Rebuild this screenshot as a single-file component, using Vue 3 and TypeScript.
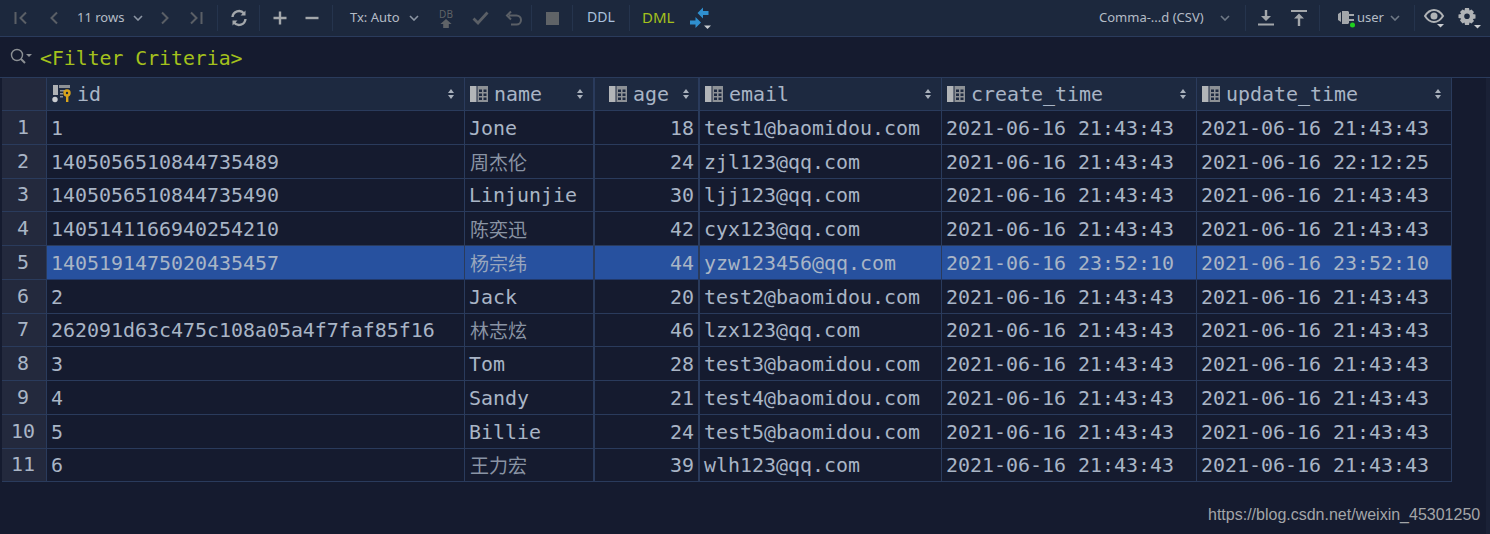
<script setup lang="ts">
interface Row {
  id: string
  name: string
  age: number
  email: string
  created: string
  updated: string
}
const stamp = '2021-06-16 21:43:43'
const rows: Row[] = [
  { id: '1', name: 'Jone', age: 18, email: 'test1@baomidou.com', created: stamp, updated: stamp },
  { id: '1405056510844735489', name: '周杰伦', age: 24, email: 'zjl123@qq.com', created: stamp, updated: '2021-06-16 22:12:25' },
  { id: '1405056510844735490', name: 'Linjunjie', age: 30, email: 'ljj123@qq.com', created: stamp, updated: stamp },
  { id: '1405141166940254210', name: '陈奕迅', age: 42, email: 'cyx123@qq.com', created: stamp, updated: stamp },
  { id: '1405191475020435457', name: '杨宗纬', age: 44, email: 'yzw123456@qq.com', created: '2021-06-16 23:52:10', updated: '2021-06-16 23:52:10' },
  { id: '2', name: 'Jack', age: 20, email: 'test2@baomidou.com', created: stamp, updated: stamp },
  { id: '262091d63c475c108a05a4f7faf85f16', name: '林志炫', age: 46, email: 'lzx123@qq.com', created: stamp, updated: stamp },
  { id: '3', name: 'Tom', age: 28, email: 'test3@baomidou.com', created: stamp, updated: stamp },
  { id: '4', name: 'Sandy', age: 21, email: 'test4@baomidou.com', created: stamp, updated: stamp },
  { id: '5', name: 'Billie', age: 24, email: 'test5@baomidou.com', created: stamp, updated: stamp },
  { id: '6', name: '王力宏', age: 39, email: 'wlh123@qq.com', created: stamp, updated: stamp },
]
const columns = ['name', 'age', 'email', 'create_time', 'update_time']
const isCjk = (s: string): boolean => /[\u4e00-\u9fff]/.test(s)
const selected = 4
</script>

<template>
  <div class="app">
    <div class="toolbar">
      <span class="cell"><svg width="16" height="16" viewBox="0 0 16 16" fill="none" stroke="#5a5f66" stroke-width="2"><path d="M2.500 2v12M13 2.500 7.500 8l5.500 5.500" /></svg></span>
      <span class="cell"><svg width="16" height="16" viewBox="0 0 16 16" fill="none" stroke="#5a5f66" stroke-width="2"><path d="M11 2.500 5.500 8l5.500 5.500" /></svg></span>
      <span class="lbl rows-lbl">11 rows</span>
      <span class="cell"><svg width="10" height="6" viewBox="0 0 10 6" fill="none" stroke="#8b95a3" stroke-width="1.600"><path d="M1 1l4 4 4-4" /></svg></span>
      <span class="cell"><svg width="16" height="16" viewBox="0 0 16 16" fill="none" stroke="#5a5f66" stroke-width="2"><path d="M5 2.500 10.500 8 5 13.500" /></svg></span>
      <span class="cell"><svg width="16" height="16" viewBox="0 0 16 16" fill="none" stroke="#5a5f66" stroke-width="2"><path d="M3 2.500 8.500 8 3 13.500M13.500 2v12" /></svg></span>
      <span class="cell"><i class="sep" /></span>
      <span class="cell"><svg width="18" height="18" viewBox="0 0 18 18" fill="none" stroke="#a3a7ab" stroke-width="2.400"><path d="M2.500 8A6.500 6.500 0 0 1 14 4.500M15.500 10A6.500 6.500 0 0 1 4 13.500" /><path d="M15.500 1.500v5h-5z M2.500 16.500v-5h5z" fill="#a3a7ab" stroke="none" /></svg></span>
      <span class="cell"><i class="sep" /></span>
      <span class="cell"><svg width="14" height="14" viewBox="0 0 14 14" fill="none" stroke="#a3a7ab" stroke-width="2.400"><path d="M7 0.500v13M0.500 7h13" /></svg></span>
      <span class="cell"><svg width="14" height="14" viewBox="0 0 14 14" fill="none" stroke="#a3a7ab" stroke-width="2.400"><path d="M0.500 7h13" /></svg></span>
      <span class="cell"><i class="sep" /></span>
      <span class="lbl tx-lbl">Tx: Auto</span>
      <span class="cell"><svg width="10" height="6" viewBox="0 0 10 6" fill="none" stroke="#8b95a3" stroke-width="1.600"><path d="M1 1l4 4 4-4" /></svg></span>
      <span class="cell db"><b>DB</b><svg width="12" height="9" viewBox="0 0 10 8" fill="#5f6367"><path d="M5 0l5 4.500H7.500V8h-5V4.500H0z" /></svg></span>
      <span class="cell"><svg width="17" height="14" viewBox="0 0 17 14" fill="none" stroke="#5a5f66" stroke-width="2.800"><path d="M1.500 7.500 6 12 15.500 1.500" /></svg></span>
      <span class="cell"><svg width="17" height="17" viewBox="0 0 17 17" fill="none" stroke="#5a5f66" stroke-width="2"><path d="M4 5.500h7.500a4.500 4.500 0 0 1 0 9H6M6 1.500 2 5.500 6 9.500" /></svg></span>
      <span class="cell"><i class="sep" /></span>
      <span class="cell"><i class="stop" /></span>
      <span class="cell"><i class="sep" /></span>
      <span class="lbl ddl-lbl">DDL</span>
      <span class="cell"><i class="sep" /></span>
      <span class="lbl dml-lbl">DML</span>
      <span class="cell"><svg width="24" height="24" viewBox="0 0 24 24"><path d="M1 14.500h5.500V11l5.500 5.500-5.500 5.500v-3.500H1zM19.500 5H14V1.500L8.500 7 14 12.500V9h5.500z" fill="#2f8fcf" /><path d="M15 19.500h7l-3.500 3.500z" fill="#c9ccd0" /></svg></span>
      <span />
      <span class="lbl">Comma-...d (CSV)</span>
      <span class="cell"><svg width="10" height="6" viewBox="0 0 10 6" fill="none" stroke="#6f7986" stroke-width="1.600"><path d="M1 1l4 4 4-4" /></svg></span>
      <span class="cell"><i class="sep" /></span>
      <span class="cell"><svg width="16" height="16" viewBox="0 0 16 16" fill="#a3a7ab"><path d="M6.800 0h2.400v6H13L8 11 3 6h3.800zM0 13.500h16V15.500H0z" /></svg></span>
      <span class="cell"><svg width="16" height="16" viewBox="0 0 16 16" fill="#a3a7ab"><path d="M0 0h16v2H0zM8 3.500l5 5H9.200V16H6.800V8.500H3z" /></svg></span>
      <span class="cell"><i class="sep" /></span>
      <span class="cell plug"><svg width="21" height="20" viewBox="0 0 21 20"><path d="M2 6l3-2v10l-3-2zM6 3h6l1 1v2h5v2h-5v3h5v2h-5v2l-1 1H6z" fill="#a3a7ab" /><circle cx="16.500" cy="17" r="2.500" fill="#1fd01f" /></svg></span>
      <span class="lbl">user</span>
      <span class="cell"><svg width="10" height="6" viewBox="0 0 10 6" fill="none" stroke="#6f7986" stroke-width="1.600"><path d="M1 1l4 4 4-4" /></svg></span>
      <span class="cell"><i class="sep" /></span>
      <span class="cell"><svg width="22" height="20" viewBox="0 0 22 20"><path d="M1 8c2.500-4 5.500-6 9-6s6.500 2 9 6c-2.500 4-5.500 6-9 6s-6.500-2-9-6z" fill="none" stroke="#b0b3b6" stroke-width="2" /><circle cx="10" cy="8" r="3.500" fill="#b0b3b6" /><path d="M13 16h7l-3.500 3.500z" fill="#c9ccd0" /></svg></span>
      <span class="cell gear"><svg width="24" height="22" viewBox="0 0 24 22"><path d="M8 1h4l.5 2.500 2-1 2.500 2.500-1.200 2 2.700.6v3.800l-2.700.6 1.200 2-2.500 2.500-2-1-.5 2.500H8l-.5-2.500-2 1L3 13.500l1.200-2L1.500 11V7.500l2.700-.6L3 5l2.500-2.500 2 1zM10 6.500a2.800 2.800 0 1 0 0 5.600 2.800 2.800 0 0 0 0-5.600z" fill="#b0b3b6" fill-rule="evenodd" /><path d="M17 18h7l-3.500 3.500z" fill="#c9ccd0" /></svg></span>
    </div>

    <div class="filter">
      <svg width="22" height="18" viewBox="0 0 22 18" fill="none" stroke="#8c9094" stroke-width="1.400"><circle cx="7" cy="7" r="5.500" /><path d="M11 11l4 4" stroke-width="2" /><path d="M16 6h6l-3 3z" fill="#8c9094" stroke="none" /></svg>
      <span class="filter-text">&lt;Filter Criteria&gt;</span>
    </div>

    <div class="body">
      <div class="grid">
        <div class="corner" />
        <div class="th">
          <svg class="tico" width="19" height="18" viewBox="0 0 19 18">
            <path d="M1 0h5v10H1z" fill="#aeb1b4" />
            <circle cx="3" cy="14.500" r="2.700" fill="#c9ccd0" />
            <path d="M7 0h11v3H7zM8 5h5v1.500H8zM8 8h3v1.500H8zM8 11h3v1.500H8z" fill="#8d9196" />
            <circle cx="15" cy="8" r="3.700" fill="#d8a41c" />
            <circle cx="15" cy="8" r="1.200" fill="#1d2940" />
            <path d="M14 10h2.400v7H14z" fill="#d8a41c" />
          </svg>
          <span>id</span>
          <span class="sort"><i class="up" /><i class="down" /></span>
        </div>
        <div v-for="c in columns" :key="c" class="th" :class="{ 'th-age': c === 'age', thick: c === 'name' || c === 'age' }">
          <svg class="tico" width="18" height="16" viewBox="0 0 18 16">
            <path d="M0 0h6.500v16H0z" fill="#b2b5b8" />
            <path d="M7.500 0h10.500v16H7.500zM9 3.500v2.500h3V3.500zM13.500 3.500v2.500h3V3.500zM9 7.500v2.500h3V7.500zM13.500 7.500v2.500h3V7.500zM9 11.500v2.500h3v-2.500zM13.500 11.500v2.500h3v-2.500z" fill="#8d9196" fill-rule="evenodd" />
          </svg>
          <span>{{ c }}</span>
          <span class="sort"><i class="up" /><i class="down" /></span>
        </div>

        <template v-for="(r, i) in rows" :key="r.id">
          <div class="rh">{{ i + 1 }}</div>
          <div class="td" :class="{ sel: i === selected }">{{ r.id }}</div>
          <div class="td thick" :class="{ sel: i === selected, cjk: isCjk(r.name) }">{{ r.name }}</div>
          <div class="td num thick" :class="{ sel: i === selected }">{{ r.age }}</div>
          <div class="td" :class="{ sel: i === selected }">{{ r.email }}</div>
          <div class="td" :class="{ sel: i === selected }">{{ r.created }}</div>
          <div class="td" :class="{ sel: i === selected }">{{ r.updated }}</div>
        </template>
      </div>
      <div class="scroll" />
    </div>

    <div class="watermark">https://blog.csdn.net/weixin_45301250</div>
  </div>
</template>

<style>
html, body { margin: 0; background: #151b2f; }
</style>

<style scoped>
.app {
  position: relative;
  width: 1490px;
  height: 534px;
  overflow: hidden;
  background: #151b2f;
  display: flex;
  flex-direction: column;
  font-family: "DejaVu Sans Mono", monospace;
  color: #a9b5c6;
}
.toolbar {
  box-sizing: border-box;
  flex: none;
  height: 37px;
  padding: 0 4px 0 8px;
  display: grid;
  grid-template-columns: 26px 40px 56px 16px 38px 24px 18px 26px 14px 28px 36px 4px 65px 30px 34px 34px 32px 4px 38px 2px 48px 16px 47px 34px 1fr 108px 36px 4px 38px 28px 12px 32px 27px 22px 16px 26px 38px;
  align-items: center;
  background: #1c283d;
  border-bottom: 1px solid #2a3b5c;
  font-family: "Noto Sans", sans-serif;
  font-size: 13px;
  color: #b4bcc6;
}
.cell { display: flex; align-items: center; justify-content: center; height: 36px; }
.gear { padding-left: 4px; box-sizing: border-box; }
.lbl { white-space: nowrap; line-height: 34px; height: 36px; }
.rows-lbl { padding-left: 3px; }
.tx-lbl { padding-left: 16px; }
.ddl-lbl { padding-left: 14px; color: #a9c0dc; font-size: 14px; }
.dml-lbl { padding-left: 5px; color: #a4c11c; font-size: 15px; }
.sep { display: block; width: 1px; height: 26px; background: #25344d; }
.stop { display: block; width: 13px; height: 13px; background: #5f6367; }
.db { flex-direction: column; }
.db b { font: 400 10px/10px "Noto Sans", sans-serif; color: #5f6367; }
.plug { justify-content: flex-end; }
.filter {
  box-sizing: border-box;
  flex: none;
  height: 41px;
  display: flex;
  align-items: center;
  padding-left: 10px;
  gap: 8px;
  background: #151b2f;
  border-bottom: 1px solid #2a3b5c;
}
.filter-text { font-size: 19.800px; color: #a4c11c; padding-top: 2px; }
.body { flex: 1; display: flex; min-height: 0; }
.grid {
  flex: none;
  margin-left: 2px;
  width: 1450px;
  display: grid;
  align-content: start;
  grid-template-columns: 45px 418px 130px 105px 242px 255px 255px;
  grid-template-rows: 33px;
  grid-auto-rows: 33.750px;
  font-size: 19.930px;
}
.corner, .rh { background: #23293d; border-bottom: 1px solid #2a3b5c; box-sizing: border-box; }
.corner { border-right: 1px solid #2a3b5c; }
.rh {
  display: flex;
  align-items: center;
  justify-content: center;
  padding-right: 2px;
  border-right: 1px solid #2a3b5c;
}
.th {
  box-sizing: border-box;
  display: flex;
  align-items: center;
  gap: 6px;
  padding: 0 10px 0 5px;
  background: #1d2940;
  border-right: 1px solid #2a3b5c;
  border-bottom: 1px solid #2a3b5c;
  white-space: nowrap;
}
.th-age { justify-content: flex-end; padding-right: 9px; }
.th-age .sort { margin-left: 8px; }
.tico { flex: none; }
.sort { margin-left: auto; display: flex; flex-direction: column; gap: 2px; }
.sort i { display: block; width: 0; height: 0; border-left: 3.500px solid transparent; border-right: 3.500px solid transparent; }
.sort .up { border-bottom: 4px solid #a9b1bc; }
.sort .down { border-top: 4px solid #a9b1bc; }
.td {
  box-sizing: border-box;
  display: flex;
  align-items: center;
  padding: 2px 5px 0 4px;
  background: #151b2f;
  border-right: 1px solid #2a3b5c;
  border-bottom: 1px solid #2a3b5c;
  white-space: nowrap;
  overflow: hidden;
}
.thick { border-right: 2px solid #2a3b5c; }
.td.num { justify-content: flex-end; padding-right: 4px; }
.td.cjk { padding-left: 5px; padding-top: 0; font-family: "Noto Sans CJK SC", sans-serif; font-weight: 400; font-size: 19px; color: #8a94a4; }
.td.sel { background: #27519f; border-bottom-color: #21396c; }
.td.sel.cjk { color: #98a6bd; }
.scroll { margin-left: auto; width: 4px; background: #1a2136; }
.watermark {
  position: absolute;
  left: 1208px;
  top: 505px;
  font: 16px/20px "Liberation Sans", sans-serif;
  color: #a3a5a8;
  white-space: nowrap;
}
</style>
